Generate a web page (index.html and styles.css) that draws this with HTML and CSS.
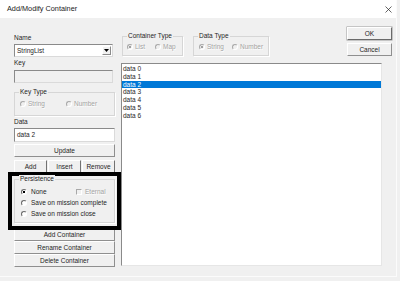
FILE: index.html
```html
<!DOCTYPE html>
<html>
<head>
<meta charset="utf-8">
<title>Add/Modify Container</title>
<link rel="stylesheet" href="styles.css">
</head>
<body>
<div class="window">
  <div class="titlebar">
    <span class="title">Add/Modify Container</span>
    <svg class="close" width="7" height="7" viewBox="0 0 7 7"><path d="M0.5 0.5L6.5 6.5M6.5 0.5L0.5 6.5" stroke="#222" stroke-width="0.7" fill="none"/></svg>
  </div>
  <div class="client">
    <div class="left">
      <div class="lbl">Name</div>
      <div class="field combo">
        <span class="combo-text">StringList</span>
        <span class="combo-btn"><svg width="5" height="3" viewBox="0 0 5 3"><path d="M0 0H5L2.5 3Z" fill="#000"/></svg></span>
      </div>
      <div class="lbl lbl-key">Key</div>
      <div class="field field-disabled key-field"></div>
      <div class="group keytype">
        <div class="group-title">Key Type</div>
        <div class="opt-row keytype-row">
          <span class="opt disabled opt-kstring"><i class="radio"></i>String</span>
          <span class="opt disabled"><i class="radio"></i>Number</span>
        </div>
      </div>
      <div class="lbl lbl-data">Data</div>
      <div class="field data-field">data 2</div>
      <button class="btn update">Update</button>
      <div class="btnrow">
        <button class="btn">Add</button>
        <button class="btn">Insert</button>
        <button class="btn">Remove</button>
      </div>
      <div class="highlight">
        <div class="group persistence">
          <div class="group-title">Persistence</div>
          <div class="opt-row pers-row first">
            <span class="opt opt-none"><i class="radio checked"></i>None</span>
            <span class="opt disabled"><i class="check"></i>Eternal</span>
          </div>
          <div class="opt-row pers-row">
            <span class="opt"><i class="radio"></i>Save on mission complete</span>
          </div>
          <div class="opt-row pers-row">
            <span class="opt"><i class="radio"></i>Save on mission close</span>
          </div>
        </div>
      </div>
      <button class="btn stack first-stack">Add Container</button>
      <button class="btn stack">Rename Container</button>
      <button class="btn stack">Delete Container</button>
    </div>
    <div class="right">
      <div class="top-row">
        <div class="group ctype">
          <div class="group-title">Container Type</div>
          <div class="opt-row ctype-row">
            <span class="opt disabled opt-list"><i class="radio checked"></i>List</span>
            <span class="opt disabled"><i class="radio"></i>Map</span>
          </div>
        </div>
        <div class="group dtype">
          <div class="group-title">Data Type</div>
          <div class="opt-row dtype-row">
            <span class="opt disabled opt-dstring"><i class="radio checked"></i>String</span>
            <span class="opt disabled"><i class="radio"></i>Number</span>
          </div>
        </div>
        <div class="dlg-buttons">
          <button class="btn default">OK</button>
          <button class="btn cancel">Cancel</button>
        </div>
      </div>
      <div class="list">
        <div class="item">data 0</div>
        <div class="item">data 1</div>
        <div class="item sel">data 2</div>
        <div class="item">data 3</div>
        <div class="item">data 4</div>
        <div class="item">data 5</div>
        <div class="item">data 6</div>
      </div>
    </div>
  </div>
</div>
</body>
</html>
```

FILE: styles.css
```css
* {
  box-sizing: border-box;
  margin: 0;
  padding: 0;
}

html,
body {
  width: 400px;
  height: 281px;
  overflow: hidden;
}

body {
  background: #f0f0f0;
  font-family: "Liberation Sans", Arial, sans-serif;
  font-size: 6.5px;
  line-height: 8px;
  color: #1e1e1e;
}

.window {
  width: 397px;
  height: 277px;
  border-right: 1px solid #fbfbfb;
  border-bottom: 1px solid #fbfbfb;
  display: flex;
  flex-direction: column;
}

.titlebar {
  height: 18px;
  flex: none;
  background: #fff;
  display: flex;
  align-items: center;
  justify-content: space-between;
  padding: 0 4px 0 7px;
}

.title {
  font-size: 7.3px;
  color: #1a1a1a;
}

.close {
  display: block;
}

.client {
  display: flex;
  align-items: flex-start;
}

/* ---------- left column ---------- */
.left {
  width: 101px;
  margin-left: 14px;
  padding-top: 16px;
  display: flex;
  flex-direction: column;
}

.lbl {
  height: 8px;
}

.field {
  height: 13px;
  background: #fff;
  border: 1px solid;
  border-color: #8a8a8a #dadada #dadada #8a8a8a;
  padding-left: 2px;
  display: flex;
  align-items: center;
}

.combo {
  width: 99px;
  margin-top: 2px;
  justify-content: space-between;
  padding-right: 1px;
}

.combo-btn {
  width: 9px;
  height: 9px;
  background: #f0f0f0;
  border: 1px solid;
  border-color: #fff #8a8a8a #8a8a8a #fff;
  display: flex;
  align-items: center;
  justify-content: center;
}

.combo-btn svg {
  display: block;
}

.lbl-key {
  margin-top: 2px;
}

.key-field {
  width: 99px;
  margin-top: 3px;
}

.field-disabled {
  background: #f0f0f0;
}

.lbl-data {
  margin-top: 2px;
}

.data-field {
  height: 14px;
  margin-top: 2px;
}

/* ---------- group boxes ---------- */
.group {
  border: 1px solid #d6d6d6;
  box-shadow: 1px 1px 0 #fff;
  display: flex;
  flex-direction: column;
}

.group-title {
  align-self: flex-start;
  height: 8px;
  margin-top: -5px;
  margin-left: 4px;
  padding: 0 1px;
  background: #f0f0f0;
  white-space: nowrap;
}

.opt-row {
  height: 8px;
  display: flex;
  align-items: center;
}

.opt {
  display: inline-flex;
  align-items: center;
  white-space: nowrap;
}

.opt.disabled {
  color: #a3a3a3;
  text-shadow: 0.5px 0.5px 0 #fff;
}

.radio {
  flex: none;
  width: 6px;
  height: 6px;
  margin-right: 2px;
  border-radius: 50%;
  border: 1px solid;
  border-color: #6a6a6a #fff #fff #6a6a6a;
  background: #fff;
}

.radio.checked {
  background: radial-gradient(circle, #000 0 0.9px, #fff 1.3px);
}

.disabled .radio {
  border-color: #a8a8a8 #fff #fff #a8a8a8;
  background: #f0f0f0;
}

.disabled .radio.checked {
  background: radial-gradient(circle, #a0a0a0 0 0.9px, #f0f0f0 1.3px);
}

.check {
  flex: none;
  width: 6px;
  height: 6px;
  margin-right: 3px;
  border: 1px solid;
  border-color: #a8a8a8 #fff #fff #a8a8a8;
  background: #f0f0f0;
}

.keytype {
  margin-top: 9px;
}

.keytype-row {
  margin-top: 4px;
  margin-bottom: 7px;
  padding-left: 5px;
}

.opt-kstring {
  width: 46px;
}

/* ---------- buttons ---------- */
.btn {
  height: 13px;
  font: inherit;
  color: #1e1e1e;
  background: #f0f0f0;
  border: 1px solid;
  border-color: #fff #8f8f8f #8f8f8f #fff;
  display: flex;
  align-items: center;
  justify-content: center;
  white-space: nowrap;
}

.update {
  margin-top: 2px;
}

.btnrow {
  margin-top: 3px;
  display: grid;
  grid-template-columns: repeat(3, 1fr);
  column-gap: 1px;
}

.btnrow .btn {
  border-right-color: #727272;
}

/* ---------- highlighted persistence ---------- */
.highlight {
  position: relative;
  z-index: 1;
  margin: -1px -6px 0 -6px;
  border: 4px solid #000;
  padding: 3px 2px;
}

.persistence .pers-row {
  margin-top: 3px;
  padding-left: 6px;
}

.persistence .pers-row.first {
  margin-top: 5px;
}

.persistence .pers-row:last-child {
  margin-bottom: 4px;
}

.persistence .radio {
  margin-right: 4px;
}

.opt-none {
  width: 55px;
}

.stack {
  height: 13px;
}

.first-stack {
  margin-top: -2px;
}

/* ---------- right column ---------- */
.right {
  margin-left: 6px;
  width: 271px;
  display: flex;
  flex-direction: column;
}

.top-row {
  display: flex;
  align-items: flex-start;
}

.ctype {
  width: 61px;
  margin-top: 18px;
  margin-left: 1px;
}

.dtype {
  width: 76px;
  margin-top: 18px;
  margin-left: 10px;
}

.ctype-row,
.dtype-row {
  margin-top: 3px;
  margin-bottom: 4px;
}

.ctype-row {
  padding-left: 4px;
}

.opt-list {
  width: 28px;
}

.dtype-row {
  padding-left: 5px;
}

.opt-dstring {
  width: 33px;
}

.dlg-buttons {
  margin-left: auto;
  margin-top: 9px;
  width: 45px;
  display: flex;
  flex-direction: column;
  gap: 3px;
}

.btn.default {
  border-color: #fff #6a6a6a #6a6a6a #fff;
  box-shadow: 0 0 0 0.5px #9a9a9a;
}

.list {
  margin-top: 7px;
  width: 261px;
  height: 203px;
  background: #fff;
  border: 1px solid;
  border-color: #8a8a8a #e6e6e6 #e6e6e6 #8a8a8a;
  padding-top: 1px;
}

.item {
  height: 7.8px;
  line-height: 7.8px;
  padding-left: 1px;
}

.item.sel {
  background: #0078d7;
  color: #fff;
}
```
